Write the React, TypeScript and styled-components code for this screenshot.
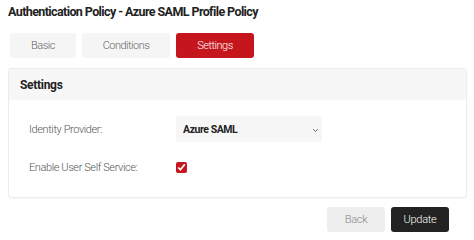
import React, { useState } from "react";
import styled, { createGlobalStyle } from "styled-components";

const GlobalStyle = createGlobalStyle`
  html, body {
    margin: 0;
    padding: 0;
    background: #ffffff;
    font-family: Roboto, "Liberation Sans", Arial, sans-serif;
    color: #333333;
  }
`;

const Page = styled.div`
  width: 474px;
  height: 240px;
  box-sizing: border-box;
  padding: 4px 7px 0 8px;
  overflow: hidden;
`;

const Title = styled.h1`
  margin: 0;
  font-size: 12.5px;
  line-height: 16px;
  font-weight: 700;
  letter-spacing: -0.6px;
  color: #222222;
`;

const Tabs = styled.div`
  display: flex;
  gap: 6px;
  margin: 13px 0 0 2px;
`;

const Tab = styled.button<{ $active?: boolean; $w: number }>`
  height: 25px;
  width: ${(p) => p.$w}px;
  border: none;
  border-radius: 3px;
  padding: 0;
  font-family: inherit;
  font-size: 11px;
  font-weight: 300;
  letter-spacing: -0.5px;
  background: ${(p) => (p.$active ? "#c4161c" : "#f5f5f5")};
  color: ${(p) => (p.$active ? "#ffffff" : "#666666")};
  cursor: pointer;
`;

const Card = styled.section`
  margin-top: 10px;
  border: 1px solid #ececec;
  border-radius: 3px;
  box-shadow: 0 1px 2px rgba(0, 0, 0, 0.04);
  overflow: hidden;
`;

const CardHeader = styled.div`
  height: 31px;
  display: flex;
  align-items: center;
  padding-left: 11px;
  background: #f7f7f7;
  font-size: 12px;
  font-weight: 700;
  letter-spacing: -0.3px;
  color: #222222;
`;

const CardBody = styled.div`
  display: flex;
  flex-direction: column;
  gap: 19px;
  padding: 16px 0 23px 20px;
`;

const Row = styled.div`
  display: grid;
  grid-template-columns: 147px auto;
  align-items: center;
`;

const Label = styled.label`
  font-size: 11px;
  font-weight: 300;
  letter-spacing: -0.4px;
  color: #555555;
`;

const SelectWrap = styled.div`
  position: relative;
  width: 146px;
`;

const Select = styled.select`
  appearance: none;
  width: 100%;
  height: 26px;
  border: none;
  border-radius: 2px;
  background: #f7f7f7;
  padding: 0 0 0 7px;
  font-family: Roboto, "Liberation Sans", Arial, sans-serif;
  font-size: 10.5px;
  font-weight: 700;
  letter-spacing: -0.45px;
  color: #222222;
  outline: none;
`;

const Chevron = styled.svg`
  position: absolute;
  right: 3px;
  top: 12px;
  pointer-events: none;
`;

const Check = styled.input`
  margin: 0;
  width: 11px;
  height: 11px;
  accent-color: #c4161c;
`;

const Footer = styled.div`
  display: flex;
  justify-content: flex-end;
  gap: 6px;
  margin-top: 9px;
  padding-right: 18px;
`;

const Button = styled.button<{ $primary?: boolean }>`
  width: 58px;
  height: 25px;
  border: none;
  border-radius: 3px;
  font-family: inherit;
  font-size: 11px;
  font-weight: 300;
  letter-spacing: -0.3px;
  background: ${(p) => (p.$primary ? "#222222" : "#eeeeee")};
  color: ${(p) => (p.$primary ? "#ffffff" : "#888888")};
  cursor: pointer;
`;

export default function App() {
  const [tab, setTab] = useState("Settings");
  const tabs: [string, number][] = [
    ["Basic", 66],
    ["Conditions", 88],
    ["Settings", 78],
  ];

  return (
    <Page>
      <GlobalStyle />
      <Title>Authentication Policy - Azure SAML Profile Policy</Title>
      <Tabs>
        {tabs.map(([name, w]) => (
          <Tab key={name} $w={w} $active={tab === name} onClick={() => setTab(name)}>
            {name}
          </Tab>
        ))}
      </Tabs>
      <Card>
        <CardHeader>Settings</CardHeader>
        <CardBody>
          <Row>
            <Label>Identity Provider:</Label>
            <SelectWrap>
              <Select defaultValue="azure">
                <option value="azure">Azure SAML</option>
              </Select>
              <Chevron width="7" height="5" viewBox="0 0 7 5">
                <path d="M1.2 1.2l2.3 2.3 2.3-2.3" fill="none" stroke="#666" strokeWidth="1" />
              </Chevron>
            </SelectWrap>
          </Row>
          <Row>
            <Label>Enable User Self Service:</Label>
            <Check type="checkbox" defaultChecked />
          </Row>
        </CardBody>
      </Card>
      <Footer>
        <Button>Back</Button>
        <Button $primary>Update</Button>
      </Footer>
    </Page>
  );
}
